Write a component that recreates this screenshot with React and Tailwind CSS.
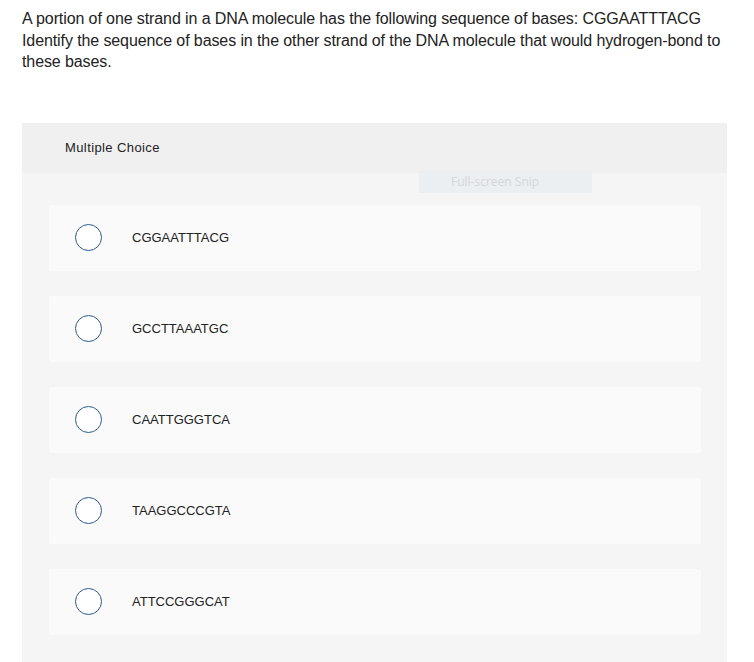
const OPTIONS = ['CGGAATTTACG', 'GCCTTAAATGC', 'CAATTGGGTCA', 'TAAGGCCCGTA', 'ATTCCGGGCAT']

function Radio() {
  return <span className="block h-[27px] w-[27px] shrink-0 rounded-full border-[1.5px] border-[#2c5a8c] bg-white" />
}

export default function App() {
  return (
    <div className="min-h-[662px] bg-white font-['Liberation_Sans',Arial,sans-serif] text-[#222]">
      <div className="px-[22px] pt-[8px] text-[16px] leading-[21.5px] tracking-[-0.1px]">
        A portion of one strand in a DNA molecule has the following sequence of bases: CGGAATTTACG
        <br />
        Identify the sequence of bases in the other strand of the DNA molecule that would hydrogen-bond to these bases.
      </div>

      <div className="ml-[22px] mr-[27px] mt-[50px] bg-[#f5f5f5] pb-[30px]">
        <div className="relative flex h-[50px] items-center bg-[#f0f0f0] pl-[43px] text-[13px] tracking-[0.4px] text-[#222]">
          Multiple Choice
          <div className="absolute left-[397px] top-[48px] flex h-[22px] w-[173px] items-center bg-[#ebeff2] pl-[32px] font-['Open_Sans',sans-serif] text-[12px] tracking-normal text-[#d6d6d6]">
            Full-screen Snip
          </div>
        </div>

        <div className="flex flex-col gap-[25px] pl-[27px] pr-[26px] pt-[32px]">
          {OPTIONS.map((opt) => (
            <div key={opt} className="flex h-[66px] items-center rounded-[3px] bg-[#fafafa] pl-[26px]">
              <Radio />
              <span className="ml-[30px] text-[13px] text-[#222]">{opt}</span>
            </div>
          ))}
        </div>
      </div>
    </div>
  )
}
